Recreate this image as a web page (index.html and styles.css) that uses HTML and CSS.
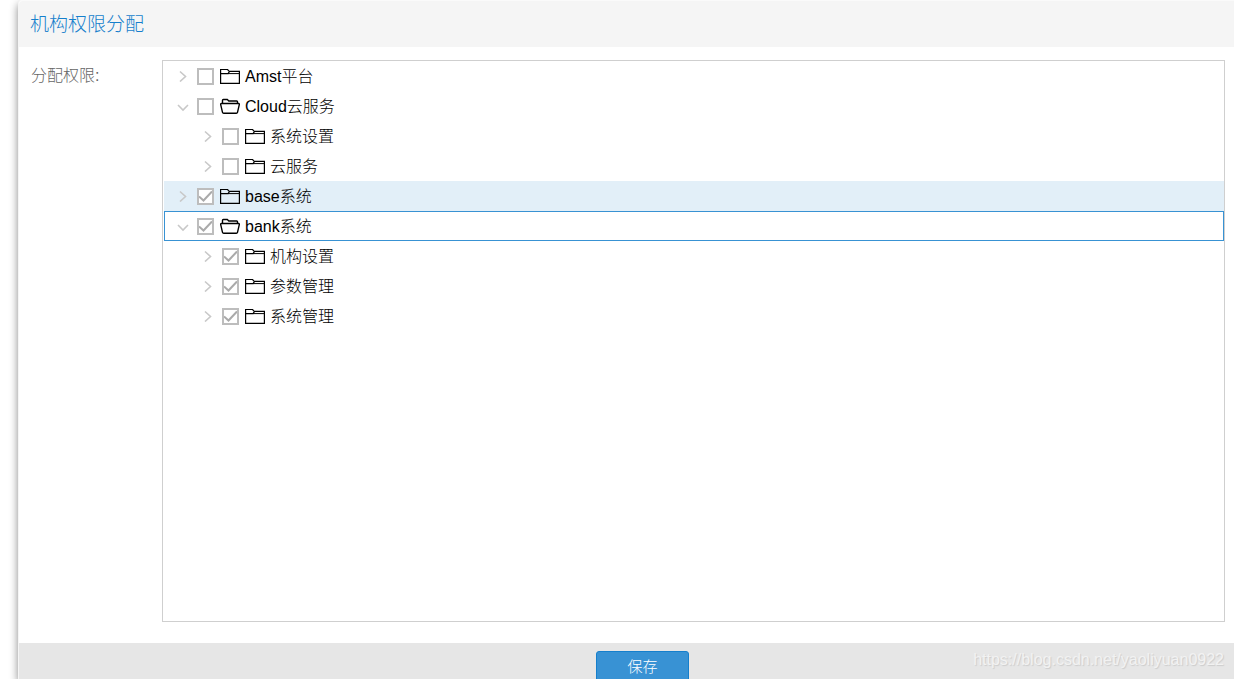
FILE: index.html
```html
<!DOCTYPE html>
<html lang="zh-CN">
<head>
<meta charset="UTF-8" />
<meta name="viewport" content="width=device-width, initial-scale=1" />
<title>机构权限分配</title>
<link rel="stylesheet" href="styles.css">
</head>
<body>
  <!-- 图标 -->
  <svg class="sprite" aria-hidden="true">
    <symbol id="arrow-right" viewBox="0 0 12 12">
      <path d="M3 1.5 L8.5 6.5 L3 11.5" fill="none" stroke="currentColor" stroke-width="1.6"/>
    </symbol>
    <symbol id="arrow-down" viewBox="0 0 12 12">
      <path d="M1 5 L6 10 L11 5" fill="none" stroke="currentColor" stroke-width="1.6"/>
    </symbol>
    <symbol id="folder" viewBox="0 0 20 16">
      <path d="M0.6 15.4 V1.5 H7.6 L9.2 3.4 H19.4 V15.4 Z M0.6 5.6 H8 L9.4 3.6" fill="none" stroke="currentColor" stroke-width="1.2"/>
      <path d="M8 5.6 H19.4" fill="none" stroke="currentColor" stroke-width="1"/>
    </symbol>
    <symbol id="folder-open" viewBox="0 0 20 16">
      <path d="M2.5 5.5 V2.3 Q2.5 1.5 3.3 1.5 H7.3 L8.8 3 H16.7 Q17.5 3 17.5 3.8 V5.5 M1.4 5.5 H18.6 Q19.6 5.5 19.3 6.6 L17.5 14.3 Q17.3 15.2 16.3 15.2 H3.7 Q2.7 15.2 2.5 14.3 L0.7 6.6 Q0.4 5.5 1.4 5.5 Z" fill="none" stroke="currentColor" stroke-width="1.4"/>
    </symbol>
  </svg>

  <div class="window">
    <div class="header">
      <h1 class="title">机构权限分配</h1>
    </div>

    <div class="content">
      <div class="field-label" id="tree-label">分配权限:</div>
      <ul class="tree" aria-labelledby="tree-label">
        <li>
          <div class="row">
            <button class="arrow" aria-label="展开"><svg><use href="#arrow-right"/></svg></button>
            <label class="node"><input type="checkbox"><svg class="folder"><use href="#folder"/></svg><span>Amst平台</span></label>
          </div>
        </li>
        <li>
          <div class="row">
            <button class="arrow" aria-label="收起"><svg><use href="#arrow-down"/></svg></button>
            <label class="node"><input type="checkbox"><svg class="folder"><use href="#folder-open"/></svg><span>Cloud云服务</span></label>
          </div>
          <ul class="children">
            <li>
              <div class="row">
                <button class="arrow" aria-label="展开"><svg><use href="#arrow-right"/></svg></button>
                <label class="node"><input type="checkbox"><svg class="folder"><use href="#folder"/></svg><span>系统设置</span></label>
              </div>
            </li>
            <li>
              <div class="row">
                <button class="arrow" aria-label="展开"><svg><use href="#arrow-right"/></svg></button>
                <label class="node"><input type="checkbox"><svg class="folder"><use href="#folder"/></svg><span>云服务</span></label>
              </div>
            </li>
          </ul>
        </li>
        <li>
          <div class="row over">
            <button class="arrow" aria-label="展开"><svg><use href="#arrow-right"/></svg></button>
            <label class="node"><input type="checkbox" checked><svg class="folder"><use href="#folder"/></svg><span>base系统</span></label>
          </div>
        </li>
        <li>
          <div class="row focused">
            <button class="arrow" aria-label="收起"><svg><use href="#arrow-down"/></svg></button>
            <label class="node"><input type="checkbox" checked><svg class="folder"><use href="#folder-open"/></svg><span>bank系统</span></label>
          </div>
          <ul class="children">
            <li>
              <div class="row">
                <button class="arrow" aria-label="展开"><svg><use href="#arrow-right"/></svg></button>
                <label class="node"><input type="checkbox" checked><svg class="folder"><use href="#folder"/></svg><span>机构设置</span></label>
              </div>
            </li>
            <li>
              <div class="row">
                <button class="arrow" aria-label="展开"><svg><use href="#arrow-right"/></svg></button>
                <label class="node"><input type="checkbox" checked><svg class="folder"><use href="#folder"/></svg><span>参数管理</span></label>
              </div>
            </li>
            <li>
              <div class="row">
                <button class="arrow" aria-label="展开"><svg><use href="#arrow-right"/></svg></button>
                <label class="node"><input type="checkbox" checked><svg class="folder"><use href="#folder"/></svg><span>系统管理</span></label>
              </div>
            </li>
          </ul>
        </li>
      </ul>
    </div>

    <div class="footer">
      <button class="save">保存</button>
      <span class="watermark">https://blog.csdn.net/yaoliyuan0922</span>
    </div>
  </div>
</body>
</html>
```
FILE: styles.css
```css
* {
  box-sizing: border-box;
}
body {
  margin: 0;
  height: 100vh;
  overflow: hidden;
  background: #fff;
  font-family: "Liberation Sans", "Noto Sans CJK SC", sans-serif;
  font-size: 16px;
  color: #000;
}
ul {
  list-style: none;
  margin: 0;
  padding: 0;
}
button,
input {
  font: inherit;
  margin: 0;
}
.sprite {
  display: none;
}
.window {
  display: flex;
  flex-direction: column;
  height: 100vh;
  margin-left: 18px;
  border-left: 1px solid #f5f5f5;
  border-top: 1px solid #fafafa;
  border-top-left-radius: 4px;
  background: #fff;
  box-shadow: 0 4px 8px #888;
}
.header {
  display: flex;
  align-items: center;
  height: 46px;
  padding: 2px 11px 0;
  background: #f5f5f5;
  border-top-left-radius: 4px;
}
.title {
  margin: 0;
  font-size: 19px;
  font-weight: 300;
  line-height: 24px;
  color: #157fcc;
}
.content {
  flex: 1;
  display: flex;
  min-height: 0;
  padding: 13px 9px 21px 12px;
}
.field-label {
  width: 131px;
  line-height: 32px;
  font-weight: 300;
  color: #666;
}
.tree {
  flex: 1;
  overflow: auto;
  padding-left: 1px;
  border: 1px solid #cfcfcf;
  font-weight: 300;
}
.row {
  display: flex;
  align-items: center;
  height: 30px;
  padding-left: 12px;
  border: 1px solid transparent;
}
.children .row {
  padding-left: 37px;
}
.row.over {
  background: #e2eff8;
}
.row.focused {
  border-color: #3892d3;
}
.arrow {
  width: 12px;
  height: 12px;
  margin-right: 8px;
  padding: 0;
  border: none;
  background: none;
  color: #c8c8c8;
  cursor: pointer;
}
.arrow svg {
  display: block;
  width: 12px;
  height: 12px;
}
.node {
  display: flex;
  align-items: center;
  line-height: 26px;
}
.node span {
  padding-top: 2px;
}
.node input {
  appearance: none;
  width: 17px;
  height: 17px;
  border: 2px solid #bdbdbd;
  background: #fff;
}
.node input:checked {
  background: #fff url("data:image/svg+xml,%3Csvg xmlns='http://www.w3.org/2000/svg' viewBox='0 0 13 13'%3E%3Cpath d='M0 6.5 L4.5 10.5 L13 1.5' fill='none' stroke='%23aaa' stroke-width='2'/%3E%3C/svg%3E") center / 13px 13px no-repeat;
}
.folder {
  width: 20px;
  height: 16px;
  margin: 0 5px 0 6px;
}
.footer {
  position: relative;
  display: flex;
  justify-content: center;
  align-items: flex-start;
  height: 36px;
  padding-top: 8px;
  background: #e6e6e6;
  overflow: hidden;
}
.save {
  flex: none;
  width: 93px;
  height: 32px;
  margin-right: 60px;
  margin-left: 92px;
  padding: 0 0 4px;
  border: 1px solid #157fcc;
  border-radius: 3px;
  background: #3892d4;
  color: #fff;
  font-size: 15px;
  font-weight: 300;
  cursor: pointer;
}
.watermark {
  position: absolute;
  right: 10px;
  top: 8px;
  line-height: 18px;
  color: #f2f2f2;
  text-shadow: 1px 1px 1px #ccc;
}
```
